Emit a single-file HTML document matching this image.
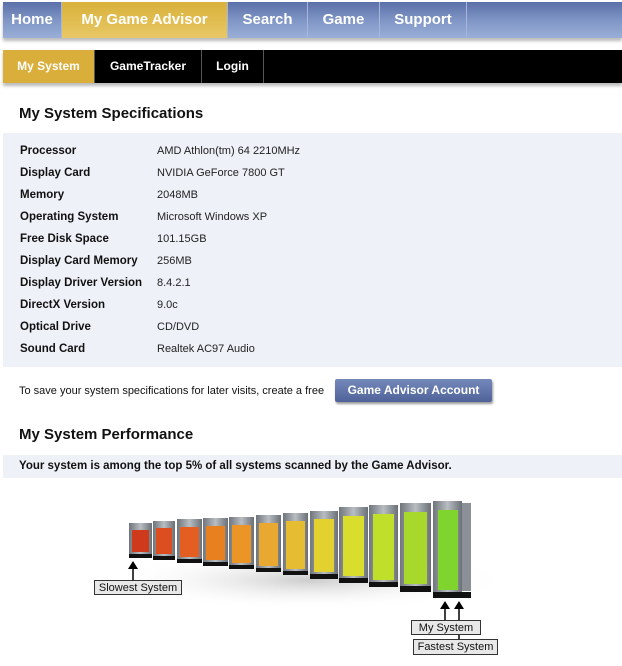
<!DOCTYPE html>
<html><head><meta charset="utf-8"><style>
*{margin:0;padding:0;box-sizing:border-box}
body{width:622px;height:666px;background:#fff;font-family:"Liberation Sans",Arial,sans-serif;position:relative;overflow:hidden;color:#111}
.abs{position:absolute}
.nav1{left:3px;top:2px;width:619px;height:36px;background:linear-gradient(#5a70a8,#7f95c5 50%,#9aafd8);box-shadow:0 3px 3px #bbb}
.nav1 div{position:absolute;top:0;height:36px;line-height:36px;color:#fff;font-weight:bold;font-size:15px;text-align:center;border-right:1px solid #a7b7da}
.nav2{left:3px;top:50px;width:619px;height:33px;background:#000;box-shadow:0 3px 3px #bbb}
.nav2 div{position:absolute;top:0;height:33px;line-height:33px;color:#fff;font-weight:bold;font-size:12px;text-align:center;border-right:1px solid #555}
h2{position:absolute;left:19px;font-size:15px;font-weight:bold;color:#111}
.panel{left:3px;top:133px;width:619px;height:234px;background:#eef1f8}
.row{position:absolute;left:20px;font-size:11px}
.row b{position:absolute;left:0;white-space:nowrap;font-size:11.5px}
.row span{position:absolute;left:137px;white-space:nowrap;color:#222}
.lab{position:absolute;background:#e8e8e8;border:1px solid #333;font-size:11px;text-align:center;line-height:14px}
</style></head><body>
<div class="abs nav1">
<div style="left:0;width:59px">Home</div>
<div style="left:59px;width:166px;background:linear-gradient(#d9b13a,#e8c866)">My Game Advisor</div>
<div style="left:225px;width:80px">Search</div>
<div style="left:305px;width:72px">Game</div>
<div style="left:377px;width:87px">Support</div>
</div>
<div class="abs nav2">
<div style="left:0;width:92px;background:#d9ae3a">My System</div>
<div style="left:92px;width:107px">GameTracker</div>
<div style="left:199px;width:62px">Login</div>
</div>
<h2 style="top:105px">My System Specifications</h2>
<div class="abs panel"></div>
<div class="row" style="top:145px"><b>Processor</b><span>AMD Athlon(tm) 64 2210MHz</span></div>
<div class="row" style="top:167px"><b>Display Card</b><span>NVIDIA GeForce 7800 GT</span></div>
<div class="row" style="top:189px"><b>Memory</b><span>2048MB</span></div>
<div class="row" style="top:211px"><b>Operating System</b><span>Microsoft Windows XP</span></div>
<div class="row" style="top:233px"><b>Free Disk Space</b><span>101.15GB</span></div>
<div class="row" style="top:255px"><b>Display Card Memory</b><span>256MB</span></div>
<div class="row" style="top:277px"><b>Display Driver Version</b><span>8.4.2.1</span></div>
<div class="row" style="top:299px"><b>DirectX Version</b><span>9.0c</span></div>
<div class="row" style="top:321px"><b>Optical Drive</b><span>CD/DVD</span></div>
<div class="row" style="top:343px"><b>Sound Card</b><span>Realtek AC97 Audio</span></div>
<div class="abs" style="left:19px;top:385px;font-size:11px">To save your system specifications for later visits, create a free</div>
<div class="abs" style="left:335px;top:379px;width:157px;height:23px;background:linear-gradient(#7588bb,#4f6399);border-radius:2px;box-shadow:1px 2px 2px #999;color:#fff;font-weight:bold;font-size:12px;text-align:center;line-height:22px">Game Advisor Account</div>
<h2 style="top:426px">My System Performance</h2>
<div class="abs" style="left:3px;top:455px;width:619px;height:23px;background:#eef1f8;font-size:11.5px;font-weight:bold;line-height:23px;padding-left:16px">Your system is among the top 5% of all systems scanned by the Game Advisor.</div>
<svg class="abs" style="left:0;top:0" width="622" height="666">
<defs><linearGradient id="g" x1="0" x2="1"><stop offset="0" stop-color="#6f757b"/><stop offset=".5" stop-color="#b8bdc2"/><stop offset="1" stop-color="#6a7076"/></linearGradient>
<radialGradient id="sh" cx=".5" cy=".5" r=".5"><stop offset="0" stop-color="#999" stop-opacity=".5"/><stop offset="1" stop-color="#fff" stop-opacity="0"/></radialGradient></defs>
<ellipse cx="310" cy="580" rx="200" ry="30" fill="url(#sh)"/>
<g>
<rect x="129" y="523" width="23" height="31" fill="url(#g)"/><rect x="132" y="530" width="17" height="22" fill="#d03a1c"/><rect x="129" y="554" width="23" height="4" fill="#111"/>
<rect x="153" y="521" width="22" height="35" fill="url(#g)"/><rect x="156" y="528" width="16" height="26" fill="#dc4d20"/><rect x="153" y="556" width="22" height="4" fill="#111"/>
<rect x="177" y="519" width="25" height="40" fill="url(#g)"/><rect x="180" y="527" width="19" height="30" fill="#e35e20"/><rect x="177" y="559" width="25" height="4" fill="#111"/>
<rect x="203" y="518" width="25" height="44" fill="url(#g)"/><rect x="206" y="526" width="19" height="34" fill="#e8801f"/><rect x="203" y="562" width="25" height="4" fill="#111"/>
<rect x="229" y="517" width="25" height="48" fill="url(#g)"/><rect x="232" y="525" width="19" height="38" fill="#eb9526"/><rect x="229" y="565" width="25" height="4" fill="#111"/>
<rect x="256" y="515" width="25" height="53" fill="url(#g)"/><rect x="259" y="523" width="19" height="43" fill="#e9a930"/><rect x="256" y="568" width="25" height="4" fill="#111"/>
<rect x="283" y="513" width="25" height="58" fill="url(#g)"/><rect x="286" y="521" width="19" height="48" fill="#e6bc33"/><rect x="283" y="571" width="25" height="4" fill="#111"/>
<rect x="310" y="511" width="28" height="63" fill="url(#g)"/><rect x="314" y="519" width="20" height="53" fill="#e3d12f"/><rect x="310" y="574" width="28" height="5" fill="#111"/>
<rect x="339" y="507" width="29" height="71" fill="url(#g)"/><rect x="343" y="516" width="21" height="60" fill="#d9dd2b"/><rect x="339" y="578" width="29" height="5" fill="#111"/>
<rect x="369" y="505" width="29" height="77" fill="url(#g)"/><rect x="373" y="514" width="21" height="66" fill="#c0df2a"/><rect x="369" y="582" width="29" height="5" fill="#111"/>
<rect x="400" y="503" width="31" height="83" fill="url(#g)"/><rect x="404" y="512" width="23" height="72" fill="#a8d82c"/><rect x="400" y="586" width="31" height="6" fill="#111"/>
<rect x="433" y="501" width="29" height="91" fill="url(#g)"/><rect x="462" y="503" width="9" height="88" fill="#8a9096"/><rect x="438" y="510" width="20" height="80" fill="#7fd42e"/><rect x="433" y="592" width="38" height="6" fill="#111"/>
</g>
<g stroke="#000" stroke-width="1.5" fill="#000">
<line x1="133" y1="566" x2="133" y2="580"/><polygon points="128,569 138,569 133,561" stroke="none"/>
<line x1="445" y1="606" x2="445" y2="621"/><polygon points="440,609 450,609 445,601" stroke="none"/>
<line x1="459" y1="606" x2="459" y2="639"/><polygon points="454,609 464,609 459,601" stroke="none"/>
</g>
</svg>
<div class="lab" style="left:94px;top:580px;width:88px;height:15px">Slowest System</div>
<div class="lab" style="left:411px;top:620px;width:70px;height:15px">My System</div>
<div class="lab" style="left:413px;top:639px;width:85px;height:16px">Fastest System</div>
</body></html>
